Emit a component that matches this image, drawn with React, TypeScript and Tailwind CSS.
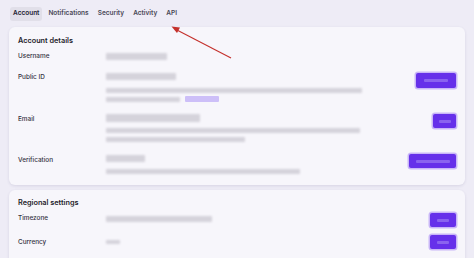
import React from "react";

// ── Blurred placeholder bits ───────────────────────────────────────
const Smudge: React.FC<{ w: number; h?: number; className?: string }> = ({ w, h = 6, className = "" }) => (
  <div
    className={`rounded-[1px] bg-[#d5d3db] blur-[0.8px] ${className}`}
    style={{ width: w, height: h }}
  />
);

const PurpleBtn: React.FC<{ w: number; h?: number; inner: number; className?: string }> = ({
  w,
  h = 15,
  inner,
  className = "",
}) => (
  <div
    className={`flex items-center justify-center rounded-[2px] bg-[#6630ea] shadow-[0_0_0_1.5px_#c9b6f7] blur-[0.5px] ${className}`}
    style={{ width: w, height: h }}
  >
    <div className="h-[3px] rounded-[1px] bg-[#8a63ef]" style={{ width: inner }} />
  </div>
);

const Label: React.FC<{ children: React.ReactNode }> = ({ children }) => (
  <div className="w-[88px] shrink-0 text-[6.4px] font-medium leading-[10px] text-[#34323f]">{children}</div>
);

const tabs = ["Account", "Notifications", "Security", "Activity", "API"];

export default function App() {
  return (
    <div className="relative h-[258px] w-[474px] overflow-hidden bg-[#eeecf6] font-['Inter',sans-serif]">
      {/* Tabs */}
      <div className="flex items-center gap-[3px] px-[10px] pt-[7px]">
        {tabs.map((t, i) => (
          <div
            key={t}
            className={`flex h-[14px] items-center px-[3px] text-[6.5px] font-semibold text-[#4a4856] ${
              i === 0 ? "rounded-[3px] bg-[#e1dfe9] text-[#222030]" : ""
            }`}
          >
            {t}
          </div>
        ))}
      </div>

      {/* Account details card */}
      <div className="mx-[9px] mt-[6px] rounded-[6px] bg-[#f7f6fb] pb-[11px] pl-[9px] pr-[9px] pt-[8px] shadow-[0_1px_3px_rgba(60,50,110,0.12)]">
        <div className="text-[7.3px] font-semibold leading-[12px] text-[#1f1d2b]">Account details</div>

        <div className="mt-[4px] flex items-start">
          <Label>Username</Label>
          <Smudge w={61} h={7} className="mt-[2px]" />
        </div>

        <div className="mt-[11px] flex items-start">
          <Label>Public ID</Label>
          <div className="flex-1">
            <Smudge w={70} h={7} className="mt-[1px]" />
            <Smudge w={256} h={5} className="mt-[8px]" />
            <div className="mt-[3px] flex items-center gap-[5px]">
              <Smudge w={74} h={5} />
              <div className="h-[6px] w-[34px] rounded-[1px] bg-[#cdbff8] blur-[0.6px]" />
            </div>
          </div>
          <PurpleBtn w={40} inner={24} className="mt-[1px]" />
        </div>

        <div className="mt-[12px] flex items-start">
          <Label>Email</Label>
          <div className="flex-1">
            <Smudge w={94} h={8} />
            <Smudge w={254} h={5} className="mt-[6px]" />
            <Smudge w={139} h={5} className="mt-[4px]" />
          </div>
          <PurpleBtn w={23} h={14} inner={12} />
        </div>

        <div className="mt-[13px] flex items-start">
          <Label>Verification</Label>
          <div className="flex-1">
            <Smudge w={39} h={7} />
            <Smudge w={194} h={5} className="mt-[7px]" />
          </div>
          <PurpleBtn w={47} h={14} inner={34} className="-mt-[1px]" />
        </div>
      </div>

      {/* Regional settings card */}
      <div className="mx-[9px] mt-[5px] h-[80px] rounded-[6px] bg-[#f7f6fb] pl-[9px] pr-[9px] pt-[7px] shadow-[0_1px_3px_rgba(60,50,110,0.12)]">
        <div className="text-[7.3px] font-semibold leading-[12px] text-[#1f1d2b]">Regional settings</div>

        <div className="mt-[4px] flex items-start">
          <Label>Timezone</Label>
          <div className="flex-1">
            <Smudge w={106} h={6} className="mt-[3px]" />
          </div>
          <PurpleBtn w={26} h={14} inner={12} />
        </div>

        <div className="mt-[10px] flex items-start">
          <Label>Currency</Label>
          <div className="flex-1">
            <Smudge w={14} h={4} className="mt-[3px]" />
          </div>
          <PurpleBtn w={26} h={14} inner={12} className="-mt-[2px]" />
        </div>
      </div>

      {/* Red annotation arrow */}
      <svg className="pointer-events-none absolute left-0 top-0" width="474" height="258" viewBox="0 0 474 258">
        <line x1="231" y1="58" x2="175" y2="29" stroke="#c4302b" strokeWidth="1.1" />
        <path d="M171.5 26.5 L180 27.5 L177 33 Z" fill="#c4302b" />
      </svg>
    </div>
  );
}
